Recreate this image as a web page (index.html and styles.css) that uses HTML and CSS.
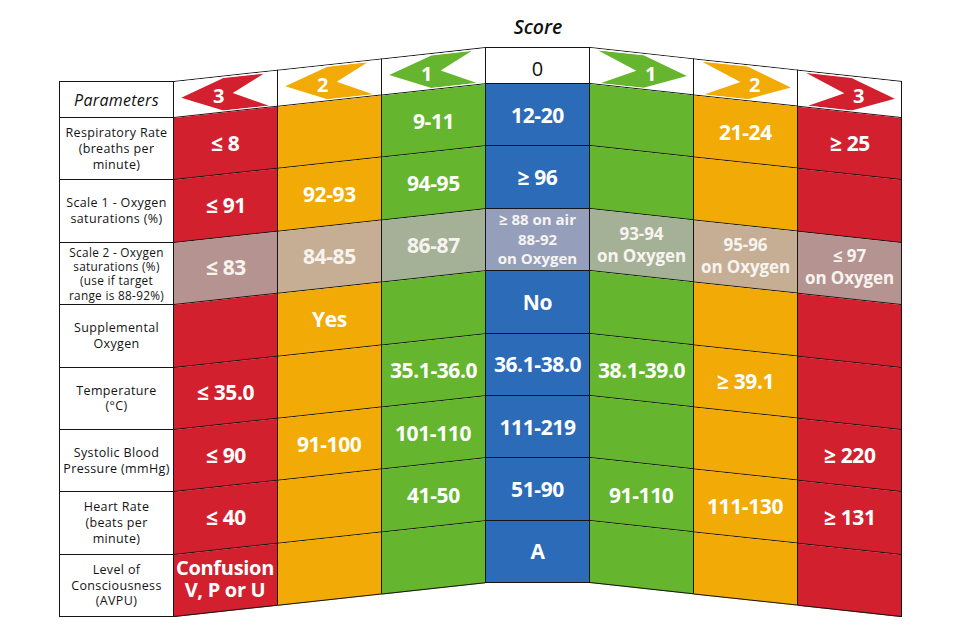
FILE: index.html
```html
<!DOCTYPE html>
<html lang="en">
<head>
<meta charset="utf-8">
<title>NEWS2 Score</title>
<link rel="stylesheet" href="styles.css">
</head>
<body>
<div class="page">
  <div class="title">Score</div>
  <div class="chart">
    <div class="col params">
      <div class="cell head"><span class="phead">Parameters</span></div>
      <div class="cell"><span class="lbl">Respiratory Rate<br>(breaths per<br>minute)</span></div>
      <div class="cell"><span class="lbl">Scale 1 - Oxygen<br>saturations (%)</span></div>
      <div class="cell"><span class="lbl lbl4">Scale 2 - Oxygen<br>saturations (%)<br>(use if target<br>range is 88-92%)</span></div>
      <div class="cell"><span class="lbl">Supplemental<br>Oxygen</span></div>
      <div class="cell"><span class="lbl">Temperature<br>(°C)</span></div>
      <div class="cell"><span class="lbl">Systolic Blood<br>Pressure (mmHg)</span></div>
      <div class="cell"><span class="lbl">Heart Rate<br>(beats per<br>minute)</span></div>
      <div class="cell"><span class="lbl">Level of<br>Consciousness<br>(AVPU)</span></div>
    </div>

    <div class="group left">
      <div class="col">
        <div class="cell head"><div class="arrow a-left red"><span class="num">3</span></div></div>
        <div class="cell red"><span class="v">≤ 8</span></div>
        <div class="cell red"><span class="v">≤ 91</span></div>
        <div class="cell g-red"><span class="v gv">≤ 83</span></div>
        <div class="cell red"></div>
        <div class="cell red"><span class="v">≤ 35.0</span></div>
        <div class="cell red"><span class="v">≤ 90</span></div>
        <div class="cell red"><span class="v">≤ 40</span></div>
        <div class="cell red"><span class="v two">Confusion<br>V, P or U</span></div>
      </div>
      <div class="col">
        <div class="cell head"><div class="arrow a-left orange"><span class="num">2</span></div></div>
        <div class="cell orange"></div>
        <div class="cell orange"><span class="v">92-93</span></div>
        <div class="cell g-orange"><span class="v gv">84-85</span></div>
        <div class="cell orange"><span class="v">Yes</span></div>
        <div class="cell orange"></div>
        <div class="cell orange"><span class="v">91-100</span></div>
        <div class="cell orange"></div>
        <div class="cell orange"></div>
      </div>
      <div class="col">
        <div class="cell head"><div class="arrow a-left green"><span class="num">1</span></div></div>
        <div class="cell green"><span class="v">9-11</span></div>
        <div class="cell green"><span class="v">94-95</span></div>
        <div class="cell g-green"><span class="v gv">86-87</span></div>
        <div class="cell green"></div>
        <div class="cell green"><span class="v">35.1-36.0</span></div>
        <div class="cell green"><span class="v">101-110</span></div>
        <div class="cell green"><span class="v">41-50</span></div>
        <div class="cell green"></div>
      </div>
    </div>

    <div class="col center">
      <div class="cell head"><span class="zero">0</span></div>
      <div class="cell blue"><span class="v">12-20</span></div>
      <div class="cell blue"><span class="v">≥ 96</span></div>
      <div class="cell g-blue"><span class="v gv three">≥ 88 on air<br>88-92<br>on Oxygen</span></div>
      <div class="cell blue"><span class="v">No</span></div>
      <div class="cell blue"><span class="v">36.1-38.0</span></div>
      <div class="cell blue"><span class="v">111-219</span></div>
      <div class="cell blue"><span class="v">51-90</span></div>
      <div class="cell blue"><span class="v">A</span></div>
    </div>

    <div class="group right">
      <div class="col">
        <div class="cell head"><div class="arrow a-right green"><span class="num">1</span></div></div>
        <div class="cell green"></div>
        <div class="cell green"></div>
        <div class="cell g-green"><span class="v gv small">93-94<br>on Oxygen</span></div>
        <div class="cell green"></div>
        <div class="cell green"><span class="v">38.1-39.0</span></div>
        <div class="cell green"></div>
        <div class="cell green"><span class="v">91-110</span></div>
        <div class="cell green"></div>
      </div>
      <div class="col">
        <div class="cell head"><div class="arrow a-right orange"><span class="num">2</span></div></div>
        <div class="cell orange"><span class="v">21-24</span></div>
        <div class="cell orange"></div>
        <div class="cell g-orange"><span class="v gv small">95-96<br>on Oxygen</span></div>
        <div class="cell orange"></div>
        <div class="cell orange"><span class="v">≥ 39.1</span></div>
        <div class="cell orange"></div>
        <div class="cell orange"><span class="v">111-130</span></div>
        <div class="cell orange"></div>
      </div>
      <div class="col">
        <div class="cell head"><div class="arrow a-right red"><span class="num">3</span></div></div>
        <div class="cell red"><span class="v">≥ 25</span></div>
        <div class="cell red"></div>
        <div class="cell g-red"><span class="v gv small">≤ 97<br>on Oxygen</span></div>
        <div class="cell red"></div>
        <div class="cell red"></div>
        <div class="cell red"><span class="v">≥ 220</span></div>
        <div class="cell red"><span class="v">≥ 131</span></div>
        <div class="cell red"></div>
      </div>
    </div>
  </div>
</div>
</body>
</html>
```

FILE: styles.css
```css
* { box-sizing: border-box; }

body {
  margin: 0;
  background: #ffffff;
  font-family: "Open Sans", "DejaVu Sans", sans-serif;
  color: #111111;
}

.page {
  width: 960px;
  height: 640px;
  overflow: hidden;
}

.title {
  margin-left: 486px;
  width: 104px;
  height: 81px;
  padding-top: 14px;
  text-align: center;
  font-style: italic;
  font-weight: 600;
  font-size: 19.5px;
  line-height: 26px;
  color: #111111;
}

.chart {
  display: flex;
  margin-left: 59px;
}

.group {
  display: flex;
}

.col {
  display: flex;
  flex-direction: column;
  width: 104px;
  border-top: 1.6px solid #151515;
  border-right: 1.6px solid #151515;
}

.params {
  width: 115px;
  border-left: 1.6px solid #151515;
}

.cell {
  height: 62.4px;
  flex: none;
  border-bottom: 1.6px solid #151515;
  display: flex;
  align-items: center;
  justify-content: center;
  text-align: center;
}

.cell.head {
  height: 36px;
  background: #ffffff;
}

.left {
  transform: skewY(-6.2deg);
  transform-origin: 0 0;
}

.right {
  transform: skewY(6.2deg);
  transform-origin: 100% 0;
}

.center {
  transform: translateY(-34px);
}

.left .v, .left .num { transform: skewY(6.2deg); }
.right .v, .right .num { transform: skewY(-6.2deg); }

.red { background: #d2202f; }
.orange { background: #f1aa06; }
.green { background: #65b52e; }
.blue { background: #2b6bb8; }
.g-red { background: #b59390; }
.g-orange { background: #c6ae95; }
.g-green { background: #a5b196; }
.g-blue { background: #959fbc; }

.phead {
  font-style: italic;
  font-weight: 500;
  font-size: 16px;
  letter-spacing: 0.3px;
}

.lbl {
  font-size: 12.5px;
  line-height: 15.7px;
  letter-spacing: 0.35px;
  color: #141414;
}

.lbl4 {
  font-size: 11.8px;
  line-height: 14.4px;
  letter-spacing: 0.3px;
}

.v {
  color: #ffffff;
  font-weight: 700;
  font-size: 21px;
  line-height: 24px;
  letter-spacing: -0.4px;
  white-space: nowrap;
}

.v.gv { color: #f7f4f0; }

.v.two {
  font-size: 20px;
  line-height: 22px;
  letter-spacing: -0.3px;
}

.v.three {
  font-size: 15px;
  line-height: 19.6px;
  letter-spacing: 0;
}

.v.small {
  font-size: 17px;
  line-height: 22px;
  letter-spacing: -0.1px;
}

.zero {
  font-size: 20px;
  font-weight: 500;
  line-height: 24px;
  padding-top: 7px;
  color: #111111;
}

.arrow {
  width: 100%;
  height: 100%;
  display: flex;
  align-items: center;
}

.a-left {
  clip-path: polygon(7% 47%, 48% 4%, 87% 4%, 57% 50%, 92% 97%, 48% 97%);
  padding-left: 39px;
}

.a-right {
  clip-path: polygon(8% 4%, 52% 4%, 94% 50%, 52% 97%, 10% 97%, 45% 50%);
  padding-left: 55px;
}

.num {
  color: #ffffff;
  font-weight: 700;
  font-size: 20px;
  line-height: 22px;
  padding-top: 3px;
}
```
